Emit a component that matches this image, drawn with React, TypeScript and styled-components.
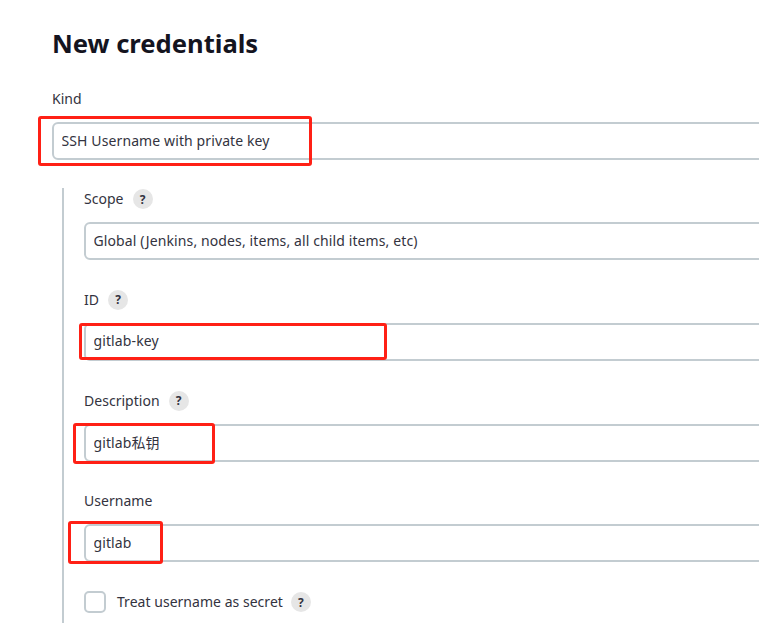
import React from "react";
import styled, { createGlobalStyle } from "styled-components";

const Global = createGlobalStyle`
  html, body { margin: 0; padding: 0; background: #fff; overflow: hidden; }
  body { font-family: "Noto Sans", "Noto Sans CJK SC", sans-serif; color: #14141f; }
`;

const Page = styled.div`
  width: 759px;
  height: 623px;
  overflow: hidden;
  padding: 27px 0 0 52px;
  box-sizing: border-box;
`;

const Form = styled.div`
  width: 900px;
`;

const Title = styled.h1`
  margin: 0 0 27px;
  font-size: 25.6px;
  line-height: 34px;
  font-weight: 700;
  color: #14141f;
`;

const Field = styled.div`
  margin-bottom: 28.75px;
`;

const LabelRow = styled.div`
  display: flex;
  align-items: center;
  gap: 9px;
  height: 22px;
  margin-bottom: 12px;
`;

const Label = styled.label`
  font-size: 14px;
  line-height: 22px;
  letter-spacing: 0.03px;
  color: #333340;
`;

const Help = styled.span`
  display: inline-flex;
  align-items: center;
  justify-content: center;
  width: 20px;
  height: 20px;
  border-radius: 50%;
  background: #e6e6e6;
  color: #333340;
  font-size: 12px;
  font-weight: 700;
`;

const InputWrap = styled.div`
  position: relative;
`;

const Input = styled.input`
  display: block;
  width: 100%;
  height: 38px;
  box-sizing: border-box;
  padding: 0 8px 2px 7.5px;
  border: 2px solid #c3ccd1;
  border-radius: 6px;
  background: #fff;
  font: 14px "Noto Sans", "Noto Sans CJK SC", sans-serif;
  letter-spacing: 0.11px;
  color: #333340;
  outline: none;
`;

const Mark = styled.div<{ $l: number; $t: number; $w: number; $h: number }>`
  position: absolute;
  left: ${(p) => p.$l}px;
  top: ${(p) => p.$t}px;
  width: ${(p) => p.$w}px;
  height: ${(p) => p.$h}px;
  box-sizing: border-box;
  border: 3px solid #ff2015;
  border-radius: 3px;
  pointer-events: none;
`;

const Nested = styled.div`
  margin: -0.75px 0 0 10px;
  padding: 0 0 40px 20px;
  border-left: 2px solid #c3ccd1;
`;

const CheckRow = styled.div`
  display: flex;
  align-items: center;
  height: 22px;
  margin-top: 1px;
`;

const Box = styled.span`
  width: 22px;
  height: 22px;
  box-sizing: border-box;
  border: 2px solid #c3ccd1;
  border-radius: 5px;
  margin-right: 11px;
`;

const CheckLabel = styled(Label)`
  margin-right: 8px;
`;

type F = { label: string; value: string; help?: boolean; mark?: [number, number, number, number] };

const fields: F[] = [
  { label: "Scope", value: "Global (Jenkins, nodes, items, all child items, etc)", help: true },
  { label: "ID", value: "gitlab-key", help: true, mark: [-5, 0, 308, 37] },
  { label: "Description", value: "gitlab私钥", help: true, mark: [-11, -0.5, 142, 41] },
  { label: "Username", value: "gitlab", mark: [-16, -3.25, 95, 43] },
];

export default function App() {
  return (
    <Page>
      <Global />
      <Form>
        <Title>New credentials</Title>
        <Field>
          <LabelRow><Label>Kind</Label></LabelRow>
          <InputWrap>
            <Input readOnly value="SSH Username with private key" />
            <Mark $l={-14} $t={-6} $w={274} $h={50} />
          </InputWrap>
        </Field>
        <Nested>
          {fields.map((f) => (
            <Field key={f.label}>
              <LabelRow>
                <Label>{f.label}</Label>
                {f.help && <Help>?</Help>}
              </LabelRow>
              <InputWrap>
                <Input readOnly value={f.value} />
                {f.mark && <Mark $l={f.mark[0]} $t={f.mark[1]} $w={f.mark[2]} $h={f.mark[3]} />}
              </InputWrap>
            </Field>
          ))}
          <CheckRow>
            <Box />
            <CheckLabel>Treat username as secret</CheckLabel>
            <Help>?</Help>
          </CheckRow>
        </Nested>
      </Form>
    </Page>
  );
}
